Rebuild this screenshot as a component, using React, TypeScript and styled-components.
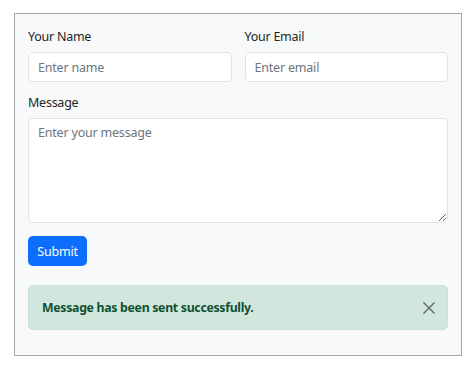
import React from "react";
import styled, { createGlobalStyle } from "styled-components";

const Global = createGlobalStyle`
  html, body { margin: 0; padding: 0; background: #ffffff; }
  body { font-family: "Noto Sans", "Open Sans", sans-serif; color: #212529; }
  * { box-sizing: border-box; }
`;

const Page = styled.div`
  padding: 13px 0 0 14px;
`;

const Card = styled.form`
  width: 448px;
  height: 343px;
  border: 1px solid #a6a6a6;
  background: #f8f9fa;
  padding: 14px 13px 0 13px;
  display: flex;
  flex-direction: column;
`;

const Row = styled.div`
  display: grid;
  grid-template-columns: 1fr 1fr;
  column-gap: 13px;
  margin-bottom: 12px;
`;

const Field = styled.div`
  display: flex;
  flex-direction: column;
`;

const Label = styled.label`
  font-size: 12.5px;
  letter-spacing: -0.25px;
  line-height: 18px;
  margin-bottom: 6px;
  color: #212529;
`;

const Input = styled.input`
  height: 30px;
  border: 1px solid #dee2e6;
  border-radius: 5px;
  background: #fff;
  padding: 0 9px;
  font-family: inherit;
  font-size: 12.5px;
  letter-spacing: -0.2px;
  color: #212529;
  outline: none;
  &::placeholder { color: #6c757d; }
`;

const TextArea = styled.textarea`
  height: 105px;
  border: 1px solid #dee2e6;
  border-radius: 5px;
  background: #fff;
  padding: 5px 9px;
  font-family: inherit;
  font-size: 12.5px;
  letter-spacing: -0.2px;
  line-height: 18px;
  color: #212529;
  outline: none;
  resize: vertical;
  &::placeholder { color: #6c757d; }
`;

const Button = styled.button`
  align-self: flex-start;
  margin-top: 13px;
  height: 30px;
  width: 59px;
  border: none;
  border-radius: 5px;
  background: #0d6efd;
  color: #fff;
  font-family: inherit;
  font-size: 12.5px;
  letter-spacing: -0.2px;
  padding: 0;
`;

const Alert = styled.div`
  margin-top: 19px;
  height: 45px;
  border: 1px solid #c8e2d5;
  border-radius: 5px;
  background: #d1e7dd;
  color: #0f5132;
  display: flex;
  align-items: center;
  justify-content: space-between;
  padding: 0 12px 0 13px;
  font-size: 12.3px;
  letter-spacing: -0.3px;
  font-weight: 700;
`;

const Close = styled.span`
  display: flex;
  align-items: center;
  justify-content: center;
  width: 12px;
  height: 12px;
  opacity: 0.55;
`;

export default function App() {
  return (
    <>
      <Global />
      <Page>
        <Card onSubmit={(e) => e.preventDefault()}>
          <Row>
            <Field>
              <Label>Your Name</Label>
              <Input placeholder="Enter name" />
            </Field>
            <Field>
              <Label>Your Email</Label>
              <Input placeholder="Enter email" />
            </Field>
          </Row>
          <Field>
            <Label>Message</Label>
            <TextArea placeholder="Enter your message" />
          </Field>
          <Button type="submit">Submit</Button>
          <Alert>
            <span>Message has been sent successfully.</span>
            <Close>
              <svg width="12" height="12" viewBox="0 0 12 12">
                <path d="M0.5 0.5 L11.5 11.5 M11.5 0.5 L0.5 11.5" stroke="#000" strokeWidth="1.4" fill="none" />
              </svg>
            </Close>
          </Alert>
        </Card>
      </Page>
    </>
  );
}
